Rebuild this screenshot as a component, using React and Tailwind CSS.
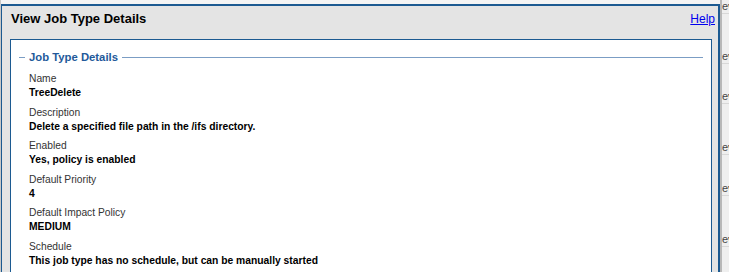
import React from "react";

const fields = [
    { label: "Name", value: "TreeDelete" },
    { label: "Description", value: "Delete a specified file path in the /ifs directory." },
    { label: "Enabled", value: "Yes, policy is enabled" },
    { label: "Default Priority", value: "4" },
    { label: "Default Impact Policy", value: "MEDIUM" },
    { label: "Schedule", value: "This job type has no schedule, but can be manually started" },
];

// rows of the page that sits behind the dialog (only its edge shows)
const behindRows = [
    { h: "h-[14px]", text: "ev" },
    { h: "h-[50px]", text: "ev" },
    { h: "h-[40px]", text: "ev" },
    { h: "h-[51px]", text: "ev" },
    { h: "h-[41px]", text: "ev" },
    { h: "h-[51px]", text: "ev" },
];

const App = () => {
    return (
        <div className="w-[729px] h-[272px] overflow-hidden bg-[#f4f4f4] flex font-['Liberation_Sans',Arial,sans-serif]">
            {/* page behind, left edge */}
            <div className="w-[1px] shrink-0 bg-[#c8c8c8]"></div>

            {/* dialog */}
            <div className="w-[719px] shrink-0 mt-[4px] flex flex-col bg-[#e4e4e4] border-t-2 border-l border-r-2 border-[#1c5a91]">
                <div className="h-[33px] shrink-0 flex items-start justify-between pl-[9px] pr-[3px] pt-[5px]">
                    <h1 className="text-[13px] leading-[15px] font-bold text-black">View Job Type Details</h1>
                    <a href="#" className="text-[12px] leading-[15px] text-[#0000ee] underline mt-[1px]">Help</a>
                </div>
                <div className="flex-1 ml-[8px] mr-[6px] bg-white border border-[#1c5a91] border-b-0 pt-[9px] pl-[8px] pr-[8px]">
                    <div className="flex items-center h-[16px]">
                        <div className="w-[6px] h-px bg-[#7b9dc4]"></div>
                        <span className="px-[4px] text-[11.3px] font-bold text-[#23599a]">Job Type Details</span>
                        <div className="flex-1 h-px bg-[#7b9dc4]"></div>
                    </div>
                    <div className="pl-[10px] pt-[7px] flex flex-col gap-[6.5px]">
                        {fields.map((f) => (
                            <div key={f.label} className="flex flex-col leading-[13px]">
                                <span className="text-[10.25px] text-[#333]">{f.label}</span>
                                <span className="text-[10.3px] font-bold text-black mt-[1px]">{f.value}</span>
                            </div>
                        ))}
                    </div>
                </div>
            </div>

            {/* page behind, right edge */}
            <div className="flex-1 bg-[#efefef] border-l-2 border-[#b8b8b8] overflow-hidden text-[11px] leading-[12px] text-[#444] whitespace-nowrap">
                {behindRows.map((r, i) => (
                    <div key={i} className={`${r.h} border-b border-[#d8d8d8] flex items-end pb-[1px]`}>
                        <span>{r.text}</span>
                    </div>
                ))}
            </div>
        </div>
    );
};

export default App;
